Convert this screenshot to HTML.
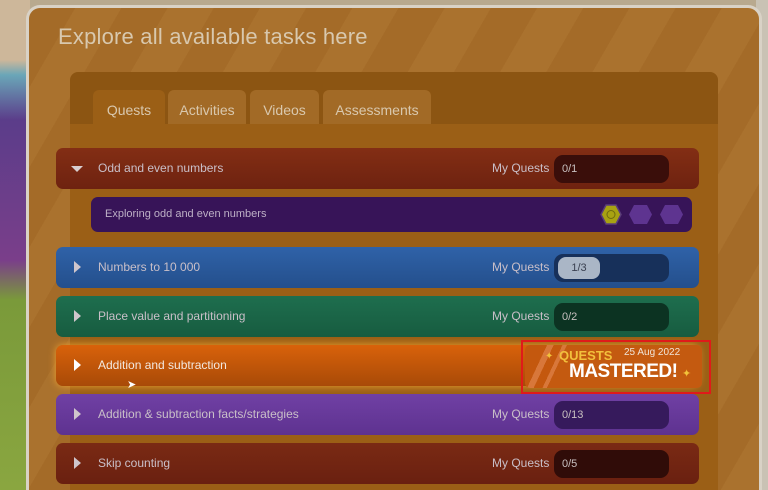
<!DOCTYPE html>
<html style="width:768px;height:490px;overflow:hidden"><head><meta charset="utf-8"><style>
*{margin:0;padding:0;box-sizing:border-box}
body{width:768px;height:490px;overflow:hidden;background:#b8a98e;font-family:"Liberation Sans",sans-serif;position:relative}
.art{position:absolute;left:0;top:0;width:30px;height:490px;background:linear-gradient(180deg,#cdb79a 0,#cdb79a 60px,#6aa6b8 75px,#5b3d8a 120px,#7a3e8a 260px,#7a9a3a 300px,#8aa640 490px)}
.rside{position:absolute;right:0;top:0;width:12px;height:490px;background:#c9c2b4}
.panel{position:absolute;left:26px;top:5px;width:736px;height:485px;border-radius:14px 14px 0 0;border-bottom:none;background:repeating-linear-gradient(120deg,#a46b28 0 40px,#aa722e 40px 80px);border:3px solid #d9d2c6;border-bottom:0}
.title{position:absolute;left:58px;top:24px;font-size:22px;color:#d8c8ae;letter-spacing:.2px}
.inner{position:absolute;left:70px;top:72px;width:648px;height:418px;background:#8c5512;border-radius:8px 8px 0 0}
.inner2{position:absolute;left:70px;top:124px;width:648px;height:366px;background:#9b5f16}
.tab{position:absolute;top:90px;height:34px;background:#a26a26;border-radius:6px 6px 0 0;color:#d9c8ae;font-size:14px;text-align:center;line-height:40px}
.row{position:absolute;left:56px;width:643px;height:41px;border-radius:7px;color:#c9bfc8;font-size:12px}
.row .t{position:absolute;left:42px;top:13px}
.row .ar{position:absolute;left:18px;top:14px;width:0;height:0;border-top:6px solid transparent;border-bottom:6px solid transparent;border-left:7px solid #cfc6cc}
.row .mq{position:absolute;left:436px;top:13px;font-size:12px}
.row .bar{position:absolute;left:498px;top:7px;width:115px;height:28px;border-radius:9px;font-size:11px;color:#c8c0c0;padding:0 8px;line-height:28px}
</style></head><body>
<div class="art"></div><div class="rside"></div>
<div class="panel"></div>
<div class="title">Explore all available tasks here</div>
<div class="inner"></div><div class="inner2"></div>
<div class="tab" style="left:93px;width:72px;background:#9b5f16">Quests</div>
<div class="tab" style="left:168px;width:78px">Activities</div>
<div class="tab" style="left:250px;width:69px">Videos</div>
<div class="tab" style="left:323px;width:108px">Assessments</div>

<div class="row" style="top:148px;background:linear-gradient(#832e14,#6e2210)"><div class="ar" style="border:none;border-left:6px solid transparent;border-right:6px solid transparent;border-top:6px solid #d8cfd0;top:18px;left:15px"></div><div class="t">Odd and even numbers</div><div class="mq">My Quests</div><div class="bar" style="background:#3a0e0a">0/1</div></div>
<div style="position:absolute;left:91px;top:197px;width:601px;height:35px;border-radius:7px;background:#371458;color:#bdb0c6;font-size:11px;padding:11px 14px">Exploring odd and even numbers
<svg style="position:absolute;left:504px;top:5px" width="90" height="25"><polygon points="6,12.5 11,3 21,3 26,12.5 21,22 11,22" fill="#a8a212" stroke="#5a3c7a" stroke-width="1.5"/><circle cx="16" cy="12.5" r="4" fill="none" stroke="#6e6a10"/><polygon points="34,12.5 39,3 52,3 57,12.5 52,22 39,22" fill="#5e3490"/><polygon points="65,12.5 70,3 83,3 88,12.5 83,22 70,22" fill="#5e3490"/></svg></div>

<div class="row" style="top:247px;background:linear-gradient(#2f62a8,#244f8c)"><div class="ar"></div><div class="t">Numbers to 10 000</div><div class="mq">My Quests</div><div class="bar" style="background:#17305a;padding:0"><div style="width:42px;height:22px;margin:3px;border-radius:8px;background:#aab6c6;color:#3a4050;text-align:center;line-height:22px;font-size:11px;margin-left:4px">1/3</div></div></div>
<div class="row" style="top:296px;background:linear-gradient(#1e6e4e,#175c40)"><div class="ar"></div><div class="t">Place value and partitioning</div><div class="mq">My Quests</div><div class="bar" style="background:#0c3322">0/2</div></div>
<div class="row" style="top:345px;background:linear-gradient(#d9620a,#a84a08);box-shadow:0 0 8px #f0a030;color:#f2e8e0"><div class="ar" style="border-left-color:#fff"></div><div class="t">Addition and subtraction</div></div>
<div style="position:absolute;left:521px;top:340px;width:190px;height:54px;border:2px solid #e01a1a"></div>
<div style="position:absolute;left:525px;top:345px;width:177px;height:43px;border-radius:5px;background:linear-gradient(115deg,#c4580e 0 20px,#d8773a 20px 26px,#c4580e 26px 34px,#d8773a 34px 38px,#c45a10 38px)"></div>
<div style="position:absolute;left:545px;top:351px;color:#f2c23a;font-size:10px">✦</div>
<div style="position:absolute;left:559px;top:348px;color:#f2c03c;font-weight:bold;font-size:13px">QUESTS</div>
<div style="position:absolute;left:624px;top:347px;color:#f0e4d8;font-size:10px">25 Aug 2022</div>
<div style="position:absolute;left:569px;top:361px;color:#fff;font-weight:bold;font-size:19px;letter-spacing:-.5px">MASTERED!</div>
<div style="position:absolute;left:682px;top:367px;color:#f2c23a;font-size:11px">✦</div>
<div class="row" style="top:394px;background:linear-gradient(#7040a4,#5e3290)"><div class="ar"></div><div class="t">Addition &amp; subtraction facts/strategies</div><div class="mq">My Quests</div><div class="bar" style="background:#361a5c">0/13</div></div>
<div class="row" style="top:443px;background:linear-gradient(#7a2a14,#6a2010)"><div class="ar"></div><div class="t">Skip counting</div><div class="mq">My Quests</div><div class="bar" style="background:#300c08">0/5</div></div>
<div style="position:absolute;left:127px;top:378px;color:#fff;font-size:11px">➤</div>
</body></html>
